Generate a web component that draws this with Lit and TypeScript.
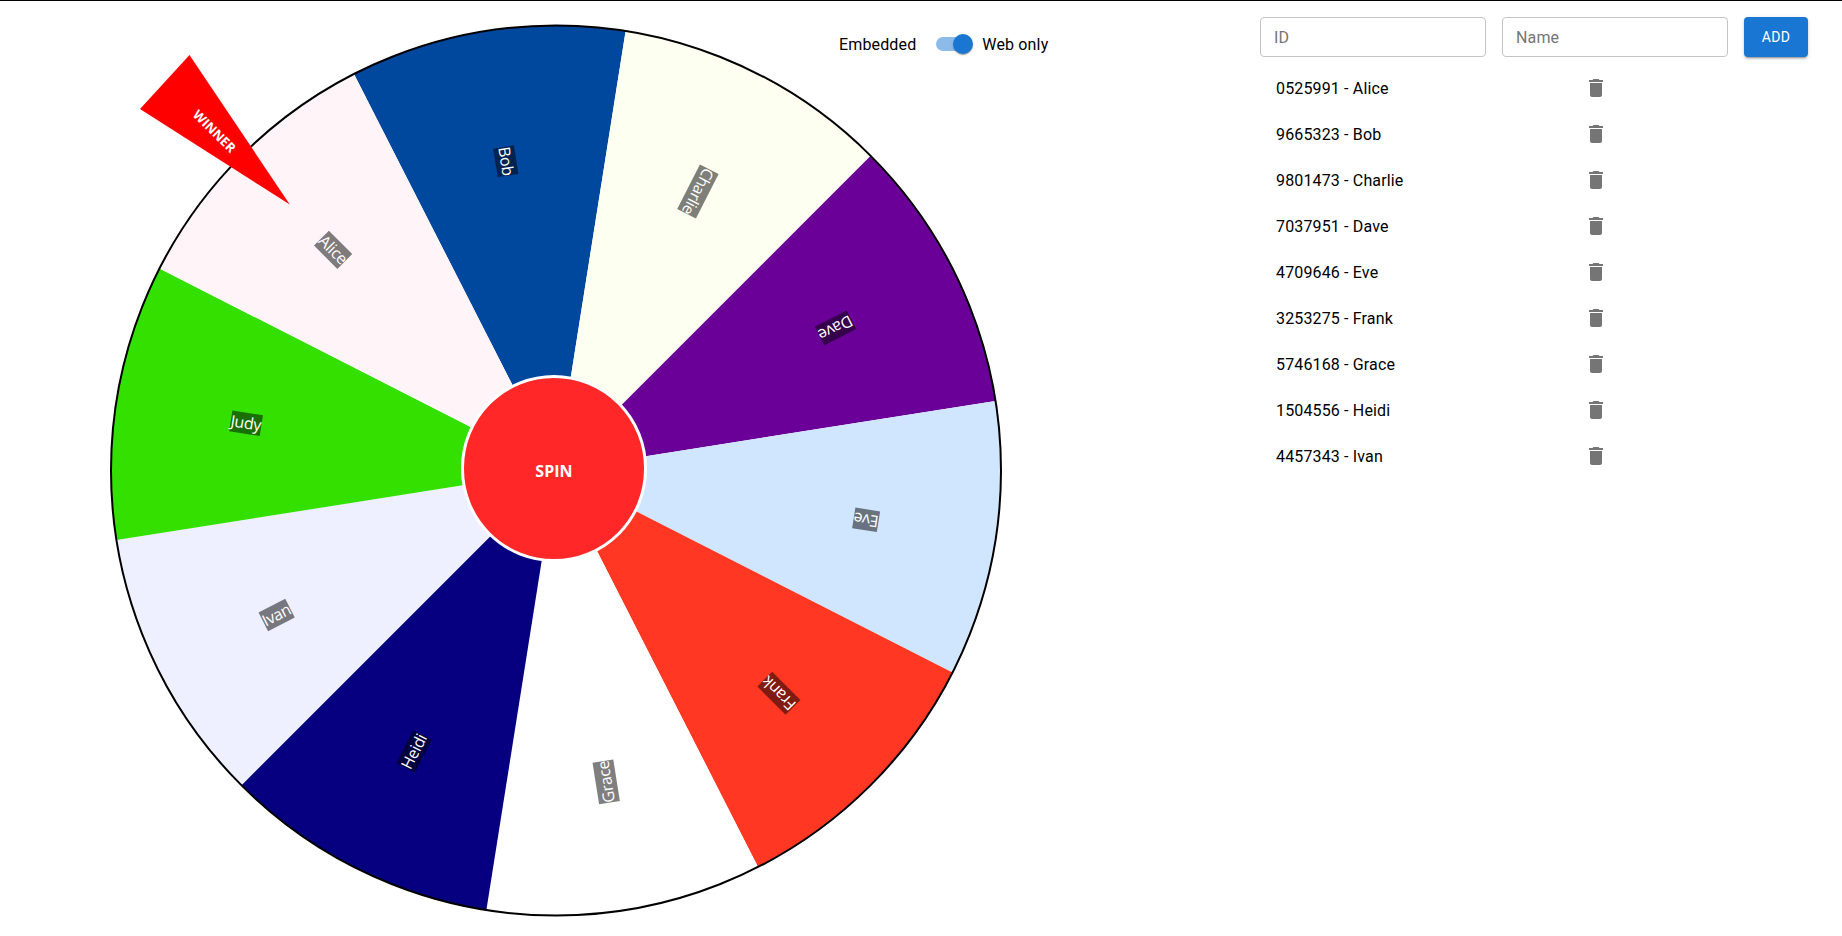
import { LitElement, html, css, svg } from "lit";
import { customElement } from "lit/decorators.js";

const CX = 556;
const CY = 469.5; // page y minus the 1px top rule
const R = 445;
const LABEL_R = 314;

const SLICES = [
  { name: "Bob", color: "#00479e" },
  { name: "Charlie", color: "#fdfff0" },
  { name: "Dave", color: "#6a0098" },
  { name: "Eve", color: "#d0e6ff" },
  { name: "Frank", color: "#ff3723" },
  { name: "Grace", color: "#ffffff" },
  { name: "Heidi", color: "#060080" },
  { name: "Ivan", color: "#eef0ff" },
  { name: "Judy", color: "#33e000" },
  { name: "Alice", color: "#fff5f8" },
];

const PEOPLE = [
  ["0525991", "Alice"],
  ["9665323", "Bob"],
  ["9801473", "Charlie"],
  ["7037951", "Dave"],
  ["4709646", "Eve"],
  ["3253275", "Frank"],
  ["5746168", "Grace"],
  ["1504556", "Heidi"],
  ["4457343", "Ivan"],
];

const pt = (deg: number, r: number) => {
  const a = (deg * Math.PI) / 180;
  return [CX + r * Math.sin(a), CY - r * Math.cos(a)];
};

@customElement("app-root")
export class AppRoot extends LitElement {
  static styles = css`
    :host {
      display: block;
      box-sizing: border-box;
      width: 1842px;
      height: 936px;
      overflow: hidden;
      border-top: 1px solid #000;
      background: #fff;
      font-family: Roboto, sans-serif;
      letter-spacing: 0.15px;
      color: #000;
    }
    .page {
      display: grid;
      grid-template-columns: 1260px 1fr;
      height: 935px;
    }
    .stage {
      position: relative;
      width: 1260px;
      height: 935px;
    }
    .wheel {
      display: block;
    }
    .label {
      position: absolute;
      font: 400 16px/20.6px "Open Sans", sans-serif;
      letter-spacing: -0.35px;
      text-rendering: geometricPrecision;
      color: #fff;
      background: rgba(0, 0, 0, 0.5);
      white-space: nowrap;
    }
    .winner {
      font: 700 13px "Open Sans", sans-serif;
      letter-spacing: 0;
      fill: #fff;
      text-anchor: middle;
      dominant-baseline: central;
    }
    .spin {
      position: absolute;
      left: 460.7px;
      top: 374.2px;
      box-sizing: border-box;
      width: 186.5px;
      height: 186.5px;
      padding: 6px 0 0;
      border: 3px solid #fff;
      border-radius: 50%;
      background: #ff2727;
      color: #fff;
      font: 700 16px "Open Sans", sans-serif;
    }
    .mode {
      position: absolute;
      left: 839px;
      top: 24px;
      display: flex;
      align-items: center;
      height: 38px;
      font-size: 16px;
    }
    .track {
      position: relative;
      width: 34px;
      height: 14px;
      margin: 0 12px 0 20px;
      border-radius: 7px;
      background: #8cbbe9;
    }
    .thumb {
      position: absolute;
      left: 17px;
      top: -3px;
      width: 20px;
      height: 20px;
      border-radius: 50%;
      background: #1976d2;
      box-shadow: 0 2px 1px -1px rgba(0, 0, 0, 0.2), 0 1px 1px 0 rgba(0, 0, 0, 0.14),
        0 1px 3px 0 rgba(0, 0, 0, 0.12);
    }
    .panel {
      padding-top: 16px;
    }
    .form {
      display: flex;
      gap: 16px;
      align-items: center;
      margin-bottom: 8px;
    }
    .form input {
      box-sizing: border-box;
      width: 226px;
      height: 40px;
      padding: 0 13px;
      border: 1px solid #c4c4c4;
      border-radius: 4px;
      outline: none;
      font: 400 16px Roboto, sans-serif;
      letter-spacing: 0.15px;
      color: #000;
    }
    .form input::placeholder {
      color: #757575;
      opacity: 1;
    }
    .add {
      width: 64px;
      height: 40px;
      border: none;
      border-radius: 4px;
      background: #1976d2;
      color: #fff;
      font: 400 14px Roboto, sans-serif;
      letter-spacing: 0.4px;
      box-shadow: 0 3px 1px -2px rgba(0, 0, 0, 0.2), 0 2px 2px 0 rgba(0, 0, 0, 0.14),
        0 1px 5px 0 rgba(0, 0, 0, 0.12);
    }
    .list {
      list-style: none;
      margin: 0;
      padding: 0;
    }
    .row {
      display: grid;
      grid-template-columns: 300px 40px;
      align-items: center;
      height: 46px;
      padding-left: 16px;
      font-size: 16px;
    }
    .del {
      display: block;
      width: 24px;
      height: 24px;
      margin: 0 auto;
      fill: #757575;
    }
  `;

  render() {
    const tri = [
      [189.5, 54],
      [140, 108],
      [289.8, 203.5],
    ]
      .map((p) => p.join(","))
      .join(" ");
    return html`
      <div class="page">
        <div class="stage">
          <svg class="wheel" width="1260" height="935" viewBox="0 0 1260 935">
            ${SLICES.map((s, i) => {
              const a = -27 + i * 36;
              const [x1, y1] = pt(a, R);
              const [x2, y2] = pt(a + 36, R);
              return svg`<path fill=${s.color} d="M${CX} ${CY}L${x1} ${y1}A${R} ${R} 0 0 1 ${x2} ${y2}Z"></path>`;
            })}
            <circle cx=${CX} cy=${CY} r=${R} fill="none" stroke="#000" stroke-width="2"></circle>
            <polygon points=${tri} fill="#f00"></polygon>
            <text class="winner" transform="translate(214.7 130) rotate(45)">WINNER</text>
          </svg>
          ${SLICES.map((s, i) => {
            const mid = -9 + i * 36;
            const [x, y] = pt(mid, LABEL_R);
            return html`<span
              class="label"
              style="left:${x}px;top:${y + 1}px;transform:translate(-50%,-50%) rotate(${mid + 90}deg) translateY(1px)"
              >${s.name}</span
            >`;
          })}
          <button class="spin">SPIN</button>
          <div class="mode">
            <span>Embedded</span>
            <div class="track"><div class="thumb"></div></div>
            <span>Web only</span>
          </div>
        </div>
        <div class="panel">
          <div class="form">
            <input placeholder="ID" />
            <input placeholder="Name" />
            <button class="add">ADD</button>
          </div>
          <ul class="list">
            ${PEOPLE.map(
              ([id, name]) => html`<li class="row">
                <span>${id} - ${name}</span>
                <svg class="del" viewBox="0 0 24 24">
                  <path d="M6 19c0 1.1.9 2 2 2h8c1.1 0 2-.9 2-2V7H6v12zM19 4h-3.5l-1-1h-5l-1 1H5v2h14V4z"></path>
                </svg>
              </li>`
            )}
          </ul>
        </div>
      </div>
    `;
  }
}
